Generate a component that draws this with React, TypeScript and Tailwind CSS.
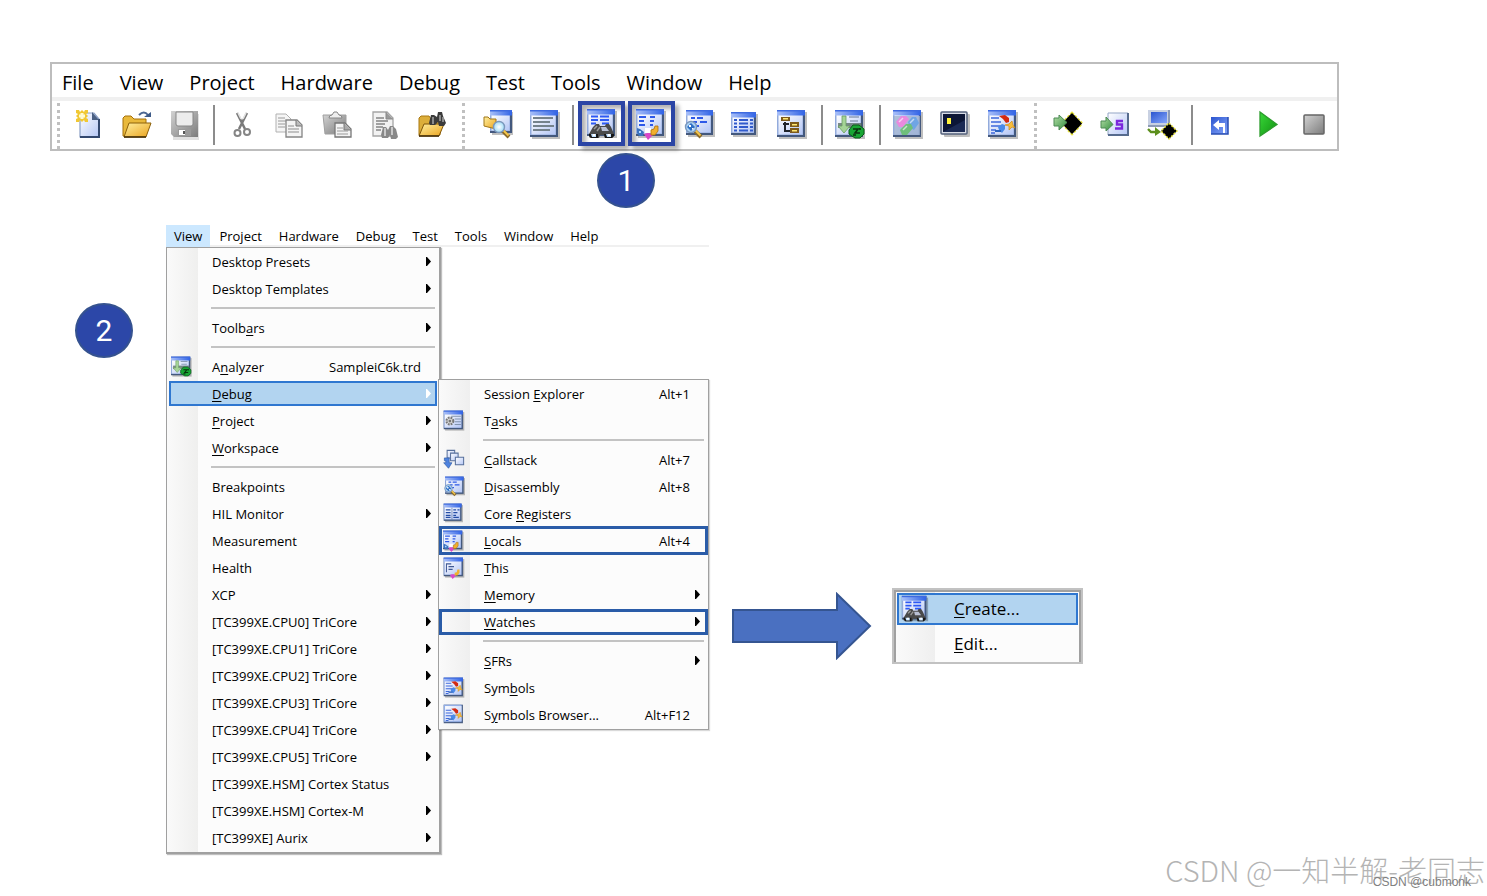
import type { ReactNode } from 'react';

const MENUS = ['File', 'View', 'Project', 'Hardware', 'Debug', 'Test', 'Tools', 'Window', 'Help'];

type IconName =
    | 'new' | 'open' | 'save' | 'cut' | 'copy' | 'paste' | 'find' | 'findFiles'
    | 'explorer' | 'output' | 'watch' | 'locals' | 'disassembly' | 'memory' | 'tree'
    | 'analyzer' | 'profiler' | 'terminal' | 'symbols' | 'download' | 'downloadSymbols'
    | 'reset' | 'back' | 'run' | 'stop' | 'tasks' | 'callstack' | 'registers' | 'this' | 'symbolsBrowser';

interface MenuEntry {
    label: string;
    icon?: IconName;
    hint?: string;
    sub?: boolean;
    active?: boolean;
    boxed?: boolean;
    shortBox?: boolean;
}

const VIEW_MENU: (MenuEntry | null)[] = [
    { label: 'Desktop Presets', sub: true },
    { label: 'Desktop Templates', sub: true },
    null,
    { label: 'Toolb&ars', sub: true },
    null,
    { label: 'A&nalyzer', icon: 'analyzer', hint: 'SampleiC6k.trd' },
    { label: '&Debug', sub: true, active: true },
    { label: '&Project', sub: true },
    { label: '&Workspace', sub: true },
    null,
    { label: 'Breakpoints' },
    { label: 'HIL Monitor', sub: true },
    { label: 'Measurement' },
    { label: 'Health' },
    { label: 'XCP', sub: true },
    { label: '[TC399XE.CPU0] TriCore', sub: true },
    { label: '[TC399XE.CPU1] TriCore', sub: true },
    { label: '[TC399XE.CPU2] TriCore', sub: true },
    { label: '[TC399XE.CPU3] TriCore', sub: true },
    { label: '[TC399XE.CPU4] TriCore', sub: true },
    { label: '[TC399XE.CPU5] TriCore', sub: true },
    { label: '[TC399XE.HSM] Cortex Status' },
    { label: '[TC399XE.HSM] Cortex-M', sub: true },
    { label: '[TC399XE] Aurix', sub: true },
];

const DEBUG_MENU: (MenuEntry | null)[] = [
    { label: 'Session &Explorer', hint: 'Alt+1' },
    { label: 'T&asks', icon: 'tasks' },
    null,
    { label: '&Callstack', icon: 'callstack', hint: 'Alt+7' },
    { label: '&Disassembly', icon: 'disassembly', hint: 'Alt+8' },
    { label: 'Core &Registers', icon: 'registers' },
    { label: '&Locals', icon: 'locals', hint: 'Alt+4', boxed: true },
    { label: '&This', icon: 'this' },
    { label: '&Memory', sub: true },
    { label: '&Watches', sub: true, boxed: true, shortBox: true },
    null,
    { label: '&SFRs', sub: true },
    { label: 'Sym&bols', icon: 'symbols' },
    { label: 'S&ymbols Browser...', icon: 'symbolsBrowser', hint: 'Alt+F12' },
];

/** Shared gradients used by the icons */
function IconDefs() {
    return (
        <svg className="absolute h-0 w-0" aria-hidden="true">
            <defs>
                <linearGradient id="title" x1="0" x2="1"><stop offset="0" stopColor="#a9c0f8" /><stop offset="1" stopColor="#2f62e6" /></linearGradient>
                <linearGradient id="body" x1="0" y1="0" x2="1" y2="1"><stop offset="0" stopColor="#ffffff" /><stop offset="1" stopColor="#b4c6f5" /></linearGradient>
                <linearGradient id="gold" x1="0" y1="0" x2="1" y2="1"><stop offset="0" stopColor="#fff0a0" /><stop offset="1" stopColor="#eaa21c" /></linearGradient>
                <linearGradient id="grey" x1="0" y1="0" x2="1" y2="1"><stop offset="0" stopColor="#d2d2d2" /><stop offset="1" stopColor="#7c7c7c" /></linearGradient>
                <linearGradient id="green" x1="0" y1="0" x2="1" y2="1"><stop offset="0" stopColor="#b5e0a8" /><stop offset="1" stopColor="#2f8a3c" /></linearGradient>
                <linearGradient id="blue" x1="0" y1="0" x2="1" y2="1"><stop offset="0" stopColor="#2b55cf" /><stop offset="1" stopColor="#86a6fb" /></linearGradient>
                <linearGradient id="run" x1="0" y1="0" x2="1" y2="1"><stop offset="0" stopColor="#39d839" /><stop offset="1" stopColor="#109010" /></linearGradient>
                <radialGradient id="lens"><stop offset="0" stopColor="#ffffff" /><stop offset="1" stopColor="#9fdcf7" /></radialGradient>
            </defs>
        </svg>
    );
}

/** Small window with a blue title bar, the base of most tool icons */
function Frame({ x = 1, y = 1, w = 28, h = 27 }: { x?: number; y?: number; w?: number; h?: number }) {
    return (
        <>
            <rect x={x + 2} y={y + 2} width={w} height={h} fill="#000" opacity=".25" />
            <rect x={x} y={y} width={w} height={h} fill="#43587d" />
            <rect x={x} y={y} width={w - 2} height={h - 2} fill="#93abdc" />
            <rect x={x + 1.5} y={y + 5} width={w - 4} height={h - 7.5} fill="url(#body)" />
            <rect x={x} y={y} width={w} height="5.5" fill="url(#title)" />
            <rect x={x} y={y} width={w} height="1.5" fill="#3e6ae0" />
        </>
    );
}

function Glass({ x, y, dotted }: { x: number; y: number; dotted?: boolean }) {
    return (
        <>
            <path d={`M${x + 4} ${y + 4}l6 6`} stroke="#8a6a2a" strokeWidth="4" />
            <path d={`M${x + 4.5} ${y + 3.5}l5 5`} stroke="#f5c64a" strokeWidth="2" />
            <circle cx={x} cy={y} r="5.5" fill={dotted ? '#a9d0f5' : 'url(#lens)'} stroke="#7b97bb" strokeWidth="1.4" />
            {dotted && <path d={`M${x} ${y - 4}l4 4l-4 4l-4 -4z`} fill="#2f6fc4" />}
            {dotted && <path d={`M${x - 2} ${y - 2}h2v2h-2zM${x + 1} ${y + 1}h1.5v1.5h-1.5z`} fill="#fff" />}
        </>
    );
}

/** Binoculars lying in front of the watch window */
const binoculars = (
    <>
        <path d="M3 26l4-7l3-3h3l1 2h5l1-2h3l2 3l3 7v2l-2 2h-7l-1-3h-4l-1 3H5l-2-2z" fill="#4a4a4a" />
        <path d="M8 21l3-3M11 23l3-4" stroke="#9c9c9c" strokeWidth="1.5" />
        <path d="M15 19h5l3 4h-7z" fill="#b9c0d4" />
        <path d="M3 26h9v4H5l-2-2zM18 26h10v2l-2 2h-7z" fill="#161616" />
        <path d="M5 26h5v3H6zM20 26h5v3h-4z" fill="#c4e2ff" />
        <path d="M7 26h2v2H7zM22 26h2v2h-2z" fill="#fff" />
    </>
);

/** Red, blue and yellow pieces of the symbol icons */
const symbolParts = (
    <>
        <path d="M4 9h8M4 13h10M4 17h14M4 21h5M4 24h4" stroke="#3c68dc" strokeWidth="1.500" />
        <path d="M12 7l6-1l4 3v4l-3 1l-3-4z" fill="#d42a12" />
        <path d="M11 18l4-3l3 1v4l-3 4l-3-3z" fill="#4a8ae8" />
        <path d="M8 22h6" stroke="#2c63bd" strokeWidth="2" />
        <path d="M18 16l4-1l3-3l1 4l2 3l-3-1l-3 3v-4z" fill="#f8bd3c" stroke="#d38b12" strokeWidth=".700" />
    </>
);

const blackDiamond = 'M19 4l10 10.500l-10 10.500l-10 -10.500z';

const ICONS: Record<IconName, ReactNode> = {
    new: (
        <>
            <path d="M8 4h14l5 6v18H8z" fill="url(#body)" stroke="#8ba0c6" strokeWidth="1.2" />
            <path d="M8 28h19V10" fill="none" stroke="#33486f" strokeWidth="2" />
            <path d="M20 3l7 8h-7z" fill="#4a6083" />
            <path d="M4 1h3l1 2l2-2l2 2l1-2h3v3l-2 1l2 2l-2 2l2 1v3h-3l-1-2l-2 2l-2-2l-1 2H4v-3l2-1l-2-2l2-2l-2-1z" fill="#f1c832" />
            <path d="M10 4v6M7 7h6" stroke="#fffbd0" strokeWidth="3" />
        </>
    ),
    open: (
        <>
            <path d="M19 6q5-5 9 0" fill="none" stroke="#4d6893" strokeWidth="2" />
            <path d="M24 8h7V3z" fill="#3d5a88" />
            <path d="M3 9l2-2h6l3 3h12v17H3z" fill="#e9b93b" stroke="#a5700b" />
            <path d="M9 14h22l-5 14H4z" fill="url(#gold)" stroke="#8c600a" />
            <path d="M4 28h22" stroke="#3e2a05" strokeWidth="1.5" />
        </>
    ),
    save: (
        <>
            <rect x="5" y="5" width="26" height="26" fill="#000" opacity=".12" />
            <path d="M3 2h27v26H6l-3-3z" fill="url(#grey)" />
            <path d="M8 3h17v12q0 2-2 2H10q-2 0-2-2z" fill="#ececec" stroke="#888" />
            <path d="M10 20h13v7H10z" fill="#9a9a9a" />
            <path d="M11 21h6v5h-6z" fill="#fff" />
            <path d="M15 22h2v3h-2z" fill="#555" />
        </>
    ),
    cut: (
        <>
            <path d="M10 4l8 16M20 4l-8 16" stroke="#7a7a7a" strokeWidth="2.5" />
            <path d="M11 4l3 6M19 4l-3 6" stroke="#e2e2e2" strokeWidth="1.5" />
            <circle cx="10.500" cy="24" r="3" fill="#fff" stroke="#858585" strokeWidth="2" />
            <circle cx="20" cy="23" r="3" fill="#fff" stroke="#858585" strokeWidth="2" />
        </>
    ),
    copy: (
        <>
            <path d="M2 5h10l5 5v13H2z" fill="#f5f5f5" stroke="#b1b1b1" />
            <path d="M4 9h7M4 12h9M4 15h7M4 18h7" stroke="#999" />
            <path d="M12 11h11l5 5v12H12z" fill="#f4f4f4" stroke="#858585" strokeWidth="1.300" />
            <path d="M22 11v6h6" fill="#bbb" stroke="#777" />
            <path d="M14 17h6M14 20h11M14 23h11" stroke="#8d8d8d" />
        </>
    ),
    paste: (
        <>
            <path d="M2 6h23v19H4z" fill="url(#grey)" stroke="#a0a0a0" />
            <path d="M8 9q0-3 3-3l2-3h3l2 3q3 0 3 3z" fill="#eee" stroke="#868686" />
            <path d="M14 14h10l6 6v8H14z" fill="#f3f3f3" stroke="#777" strokeWidth="1.300" />
            <path d="M23 14v7h7" fill="#aaa" stroke="#777" />
            <path d="M16 19h6M16 22h11M16 25h11" stroke="#999" />
        </>
    ),
    find: (
        <>
            <path d="M5 3h14l6 6v18H5z" fill="#f2f2f2" stroke="#a5a5a5" strokeWidth="1.300" />
            <path d="M18 3v7h7" fill="#999" stroke="#888" />
            <path d="M8 9h8M8 12h12M8 15h9M8 18h7M8 21h5" stroke="#858585" strokeWidth="1.300" />
            <path d="M13 26l2-8h3l2 3l2-4h3l3 3l2 8l-2 2h-5l-1-4l-2 3h-6z" fill="#888" />
            <path d="M17 19v8M24 18v8" stroke="#dedede" strokeWidth="1.500" />
        </>
    ),
    findFiles: (
        <>
            <path d="M4 9l2-2h8l2 3h9v16H4z" fill="#dcae3a" stroke="#a97811" />
            <path d="M9 15h20l-5 12H4z" fill="url(#gold)" stroke="#805507" />
            <path d="M4 27h20" stroke="#3f2b08" strokeWidth="1.500" />
            <path d="M14 14l2-8h3l3 2l1-5h4l1 4l3 7l-2 3h-5l-1-4l-3 3h-5z" fill="#3b3b3b" />
            <path d="M18 8v7M25 6v6M28 8v5" stroke="#a5a5a5" strokeWidth="1.500" />
        </>
    ),
    explorer: (
        <>
            <Frame x={9} y={1} w={22} h={23} />
            <path d="M3 8h4l2 2h6v10l-12-3z" fill="url(#gold)" stroke="#a07618" />
            <Glass x={18} y={18} />
        </>
    ),
    output: (
        <>
            <Frame x={2} />
            <path d="M5 9h20M5 13h17M5 17h21M5 21h17" stroke="#75828c" strokeWidth="1.800" />
        </>
    ),
    watch: (
        <>
            <Frame />
            <path d="M5 8.500h7M14 8.500h9M5 12h7M14 12h9M5 15.500h5M16 15.500h7" stroke="#2d59f4" strokeWidth="2" />
            {binoculars}
        </>
    ),
    locals: (
        <>
            <Frame x={0} />
            <path d="M3 9h7M14 9h5M3 13h5M14 13h4M3 17h6M14 17h3" stroke="#2d59e8" strokeWidth="1.800" />
            <path d="M9 20h6v5H9z" fill="#fff" />
            <path d="M1 20l3 1l4 3l-1 4H3l-2-3z" fill="#3b73c0" />
            <path d="M3 23h2v2H3z" fill="#b9dcff" />
            <path d="M8 26l3-1h3l3 2l-5 5z" fill="#d948c8" />
            <path d="M15 22l3-1l1-3h3v5l-3 4h-4z" fill="#f1b02c" stroke="#ad6e0a" strokeWidth=".800" />
        </>
    ),
    disassembly: (
        <>
            <Frame x={3} y={1} w={27} h={25} />
            <path d="M8 9h4M14 9h6M10 13h4M17 13h7M10 17h6" stroke="#2d59e8" strokeWidth="1.800" />
            <Glass x={8} y={18} dotted />
        </>
    ),
    memory: (
        <>
            <Frame x={1} y={3} w={25} h={23} />
            <path d="M4 11h3M9 11h9M20 11h3M4 14.500h3M9 14.500h9M20 14.500h3M4 18h3M9 18h9M20 18h3M4 21.500h3M9 21.500h9M20 21.500h3" stroke="#315bcc" strokeWidth="1.800" />
        </>
    ),
    tree: (
        <>
            <Frame x={0} />
            <path d="M8 13v9h5M6 15h6" fill="none" stroke="#20242c" strokeWidth="2" />
            <path d="M4 8h9v4H4zM13 13h9v5h-9zM13 19h9v5h-9z" fill="#7d5a1c" />
            <path d="M6 9h5v1.500H6zM15 15h5v1.500h-5zM15 21h5v1.500h-5z" fill="#ffe873" />
        </>
    ),
    analyzer: (
        <>
            <Frame x={0} />
            <path d="M14 8h10M15 12h8" stroke="#8d9cb8" strokeWidth="1.600" />
            <path d="M3 14h24v5H3z" fill="#4c5f56" opacity=".700" />
            <path d="M7 7h4v10h4l-6 7l-6-7h4z" fill="#a5d497" stroke="#6a9d62" strokeWidth=".800" />
            <path d="M14 21l4-5h6l5 4v5l-4 4h-5l-6-4z" fill="#18a534" stroke="#0a5a18" />
            <path d="M18 20h5l-3 4h5M18 26h3M25 19v2" stroke="#08330f" strokeWidth="1.600" fill="none" />
        </>
    ),
    profiler: (
        <>
            <Frame x={0} />
            <path d="M1 7h26v19H1z" fill="#9cb0cf" opacity=".800" />
            <path d="M3 13l5-6h5l3 3l-6 8H6z" fill="#e98adf" />
            <path d="M15 13l4-5h4l3 6l-5 7l-4-2z" fill="#6fa5e4" />
            <path d="M7 21l6-6h5l2 4l-6 7H9z" fill="#6fbf7b" />
            <path d="M6 13l4-4M17 14l4-4M10 21l4-4" stroke="#fff" strokeWidth="1.500" opacity=".600" />
        </>
    ),
    terminal: (
        <>
            <rect x="4" y="5" width="26" height="23" rx="1" fill="#000" opacity=".25" />
            <rect x="1" y="3" width="26" height="22" rx="1" fill="#d7dbe6" stroke="#54617c" strokeWidth="1.500" />
            <path d="M3 5h22v18H3z" fill="#1b2a54" />
            <path d="M3 5h22v6L3 23z" fill="#0c1636" />
            <path d="M7 9h4v6H7z" fill="#fff23b" />
        </>
    ),
    symbols: (
        <>
            <Frame />
            {symbolParts}
        </>
    ),
    symbolsBrowser: (
        <>
            <rect x="1" y="1" width="28" height="27" fill="#4c6084" />
            <rect x="1" y="1" width="26" height="25" fill="#92aee6" />
            <rect x="3" y="3" width="24" height="22" fill="url(#body)" />
            {symbolParts}
        </>
    ),
    download: (
        <>
            <path d={blackDiamond} fill="#0a0a05" stroke="#e9e53c" strokeWidth="2.500" strokeDasharray="2.500 1.500" />
            <path d={blackDiamond} fill="#000" />
            <path d="M1 9h5V6l8 7.500L6 21v-4H1z" fill="url(#green)" stroke="#4d8a55" />
        </>
    ),
    downloadSymbols: (
        <>
            <path d="M8 4h20v22H8z" fill="url(#body)" stroke="#93a5c5" />
            <path d="M8 26h20V4" fill="none" stroke="#566b8e" strokeWidth="2" />
            <path d="M23 12h-6v3.500h5v4h-7" fill="none" stroke="#7b27dd" strokeWidth="2.400" />
            <path d="M1 12h5V8l7 7.500L6 22v-3H1z" fill="url(#green)" stroke="#4d8a55" />
        </>
    ),
    reset: (
        <>
            <path d="M1 1h22v17H1z" fill="#8d9bb7" />
            <path d="M1 1h20v15H1z" fill="#c9d1e2" />
            <path d="M4 3h16v11H4z" fill="url(#blue)" />
            <path d="M1 20l3 3h5" fill="none" stroke="#5c8f1c" strokeWidth="2.400" />
            <path d="M8 18l6 5l-6 4z" fill="#5c8f1c" />
            <path d="M22 14l8 8l-8 8l-8-8z" fill="#000" stroke="#e9e53c" strokeWidth="1.500" strokeDasharray="2 1.500" />
        </>
    ),
    back: (
        <>
            <path d="M6 8h17v17H6z" fill="url(#blue)" />
            <path d="M6 25h17V8" fill="none" stroke="#294db3" strokeWidth="1.500" />
            <path d="M8 16l6-5v3h6v10h-2v-6h-4v3z" fill="#fff" />
        </>
    ),
    run: <path d="M8 3l17 12.500L8 27z" fill="url(#run)" stroke="#2c9c2c" strokeWidth="1.300" />,
    stop: <rect x="5" y="6" width="20" height="19" rx="1" fill="url(#grey)" stroke="#666" strokeWidth="1.500" />,
    tasks: (
        <>
            <Frame />
            <path d="M12 9h14M17 13h9M17 17h9M17 21h9" stroke="#8193ad" strokeWidth="1.600" />
            <circle cx="10" cy="16" r="5" fill="#d7d7d7" stroke="#777" strokeWidth="3" strokeDasharray="2.500 1.500" />
            <circle cx="10" cy="16" r="2" fill="#777" />
        </>
    ),
    callstack: (
        <>
            <path d="M6 2h11v11H6z" fill="url(#body)" stroke="#58709c" strokeWidth="1.500" />
            <path d="M11 6h11v11H11z" fill="url(#body)" stroke="#58709c" strokeWidth="1.500" />
            <path d="M18 12h12v11H18z" fill="url(#body)" stroke="#58709c" strokeWidth="1.500" />
            <path d="M2 13h7v7h4l-5 8l-7-8h3v-3H2z" fill="#4f83df" stroke="#315da9" />
        </>
    ),
    registers: (
        <>
            <Frame x={1} y={1} w={26} h={25} />
            <path d="M4 10h7M15 10h4M21 10h3M4 14h7M15 14h6M4 18h7M15 18h4M4 21h7M15 21h8" stroke="#244da5" strokeWidth="1.800" />
            <path d="M13 7v17" stroke="#5b75a8" />
        </>
    ),
    this: (
        <>
            <Frame />
            <path d="M5 9v13M5 10h7M8 14h8M8 18h6" fill="none" stroke="#3f5894" strokeWidth="1.500" />
            <path d="M10 26l3-1h3l3 2l-5 5z" fill="#d948c8" />
            <path d="M17 23l3-1l1-4h3v5l-3 4h-4z" fill="#f1b02c" />
        </>
    ),
};

function Icon({ name, className }: { name: IconName; className: string }) {
    return (
        <svg viewBox="0 0 32 32" className={className} aria-hidden="true">
            {ICONS[name]}
        </svg>
    );
}

function ToolGroup({ names, wide }: { names: IconName[]; wide?: boolean }) {
    return (
        <>
            {names.map((name) => (
                <button key={name} type="button" aria-label={name} className={`flex h-12 shrink-0 items-center justify-center ${wide ? 'w-12' : 'w-[47px]'}`}>
                    <Icon name={name} className="h-8 w-8" />
                </button>
            ))}
        </>
    );
}

/** Tool button with the thick blue frame around it */
function MarkedTool({ name }: { name: IconName }) {
    return (
        <button
            type="button"
            aria-label={name}
            className="flex h-[45px] w-[47px] shrink-0 items-center justify-center border-4 border-[#2b45a5] bg-white shadow-[4px_4px_4px_rgba(0,0,0,0.3),inset_4px_4px_4px_rgba(0,0,0,0.3)]"
        >
            <Icon name={name} className="h-8 w-8 shrink-0" />
        </button>
    );
}

const Divider = () => (
    <div className="flex h-12 w-[11px] shrink-0 items-center justify-center">
        <div className="h-10 w-[2px] bg-[#8c8c8c]" />
    </div>
);

function Grip({ first }: { first?: boolean }) {
    return (
        <div className={`flex h-12 shrink-0 justify-center ${first ? 'w-3' : 'w-[19px]'}`}>
            <div className="mt-[2px] w-[3px] border-l-[3px] border-dotted border-[#c0c0c0]" />
        </div>
    );
}

function Toolbar() {
    return (
        <header className="mr-[148px] ml-[50px] border-2 border-[#bdbdbd]">
            <nav className="flex h-[37px] items-center gap-[26px] border-b-4 border-[#f0f0f0] pt-1 pl-[10px] text-[20px] leading-6">
                {MENUS.map((menu) => (
                    <button key={menu} type="button">{menu}</button>
                ))}
            </nav>
            <div className="flex items-start">
                <Grip first />
                <ToolGroup names={['new', 'open', 'save']} wide />
                <Divider />
                <ToolGroup names={['cut', 'copy', 'paste', 'find', 'findFiles']} />
                <Grip />
                <ToolGroup names={['explorer', 'output']} />
                <Divider />
                <div className="flex gap-[3px]">
                    <MarkedTool name="watch" />
                    <MarkedTool name="locals" />
                </div>
                <ToolGroup names={['disassembly', 'memory', 'tree']} />
                <Divider />
                <ToolGroup names={['analyzer']} />
                <Divider />
                <ToolGroup names={['profiler', 'terminal', 'symbols']} />
                <Grip />
                <ToolGroup names={['download', 'downloadSymbols', 'reset']} />
                <Divider />
                <ToolGroup names={['back', 'run', 'stop']} />
            </div>
        </header>
    );
}

function Step({ children, className }: { children: ReactNode; className: string }) {
    return (
        <div className={`flex h-[55px] w-[58px] shrink-0 items-center justify-center rounded-[50%] border-2 border-[#35528f] bg-[#2c47a8] font-[Roboto,sans-serif] text-[30px] text-white ${className}`}>
            {children}
        </div>
    );
}

/** Label where the character after & is underlined */
function Label({ text }: { text: string }) {
    const at = text.indexOf('&');
    if (at < 0) return <span>{text}</span>;
    return (
        <span>
            {text.slice(0, at)}
            <u className="underline-offset-2">{text[at + 1]}</u>
            {text.slice(at + 2)}
        </span>
    );
}

function MenuRows({ entries }: { entries: (MenuEntry | null)[] }) {
    return (
        <>
            {entries.map((entry, i) => {
                if (!entry) {
                    return (
                        <div key={i} className="flex h-3 items-center pr-1 pl-11">
                            <div className="h-[2px] w-full bg-[#c3c3c3]" />
                        </div>
                    );
                }
                return (
                    <button key={entry.label} type="button" className="relative flex h-[27px] w-full items-center text-left">
                        {entry.active && <span className="absolute inset-x-[2px] inset-y-px border-2 border-[#2f77d0] bg-[#b2d4f0]" />}
                        {entry.boxed && (
                            <span className={`absolute inset-x-0 border-3 border-[#2a5ca8] ${entry.shortBox ? 'top-px bottom-0' : '-inset-y-px'}`} />
                        )}
                        <span className="relative flex w-[45px] shrink-0 pl-1">
                            {entry.icon && <Icon name={entry.icon} className="h-[22px] w-[22px]" />}
                        </span>
                        <span className="relative flex grow justify-between pr-[18px] whitespace-nowrap">
                            <Label text={entry.label} />
                            {entry.hint && <span>{entry.hint}</span>}
                        </span>
                        {entry.sub && (
                            <svg viewBox="0 0 5 9" className={`absolute right-2 h-[9px] w-[5px] ${entry.active ? 'fill-white' : 'fill-black'}`}>
                                <path d="M0 0h1l4 4.500l-4 4.500h-1z" />
                            </svg>
                        )}
                    </button>
                );
            })}
        </>
    );
}

function ViewMenu() {
    return (
        <div className="w-[543px] shrink-0 text-[13px] leading-[18px]">
            <nav className="flex h-[22px] gap-px border-b-2 border-[#f0f0f0]">
                {MENUS.slice(1).map((menu, i) => (
                    <button key={menu} type="button" className={`h-[22px] px-2 ${i === 0 ? 'bg-[#cce8ff]' : ''}`}>{menu}</button>
                ))}
            </nav>
            <div className="relative w-[275px]">
                <div className="border border-r-2 border-b-2 border-[#a0a0a0] bg-[linear-gradient(90deg,#fafafa_0,#efefee_31px,#fcfcfc_31px)] pb-px shadow-[1px_1px_1px_rgba(0,0,0,0.25)]">
                    <MenuRows entries={VIEW_MENU} />
                </div>
                <div className="absolute top-[132px] left-[272px] w-[271px] border border-[#a0a0a0] bg-[linear-gradient(90deg,#fafafa_0,#efefef_31px,#fcfcfc_31px)] pb-px shadow-[1px_1px_1px_rgba(0,0,0,0.15)]">
                    <MenuRows entries={DEBUG_MENU} />
                </div>
            </div>
        </div>
    );
}

function WatchesMenu() {
    return (
        <div className="mt-[363px] ml-5 w-[191px] shrink-0 self-start border-2 border-[#c2c2c2] text-[17px] leading-6">
            <div className="border-x-2 border-t-2 border-[#a0a0a0] bg-[linear-gradient(90deg,#fafafa_0,#efefef_39px,#fcfcfc_39px)] px-px pt-px">
                <button type="button" className="flex h-8 w-full items-center border-2 border-[#2f77d0] bg-[#b2d4f0] pl-[2px]">
                    <span className="w-[53px]"><Icon name="watch" className="h-7 w-7" /></span>
                    <Label text="&Create..." />
                </button>
                <button type="button" className="flex h-[37px] w-full items-center pl-[57px]">
                    <Label text="&Edit..." />
                </button>
            </div>
        </div>
    );
}

export default function App() {
    return (
        <main className="relative min-h-screen overflow-hidden bg-white pt-[62px] pb-10 font-['Open_Sans','Noto_Sans',sans-serif] text-black">
            <IconDefs />
            <Toolbar />
            <Step className="mt-[2px] ml-[597px]">1</Step>
            <section className="mt-[17px] flex items-start">
                <Step className="mt-[78px] mr-[33px] ml-[75px]">2</Step>
                <ViewMenu />
                <svg viewBox="0 0 140 68" className="mt-[367px] ml-[23px] h-[68px] w-[140px] shrink-0" aria-hidden="true">
                    <path d="M1 18h104V2l33 32l-33 32V50H1z" fill="#4a70c1" stroke="#355591" strokeWidth="2" />
                </svg>
                <WatchesMenu />
            </section>
            <p className="absolute right-[2px] bottom-[5px] font-['Noto_Sans_CJK_SC',sans-serif] text-[29px] leading-[44px] font-light whitespace-nowrap text-[#b4b4b4]">
                CSDN @一知半解-老同志
            </p>
            <p className="absolute right-4 bottom-[6px] font-['Liberation_Sans',sans-serif] text-[12px] leading-4 whitespace-nowrap text-[#808080]">
                CSDN @cubmonk
            </p>
        </main>
    );
}
